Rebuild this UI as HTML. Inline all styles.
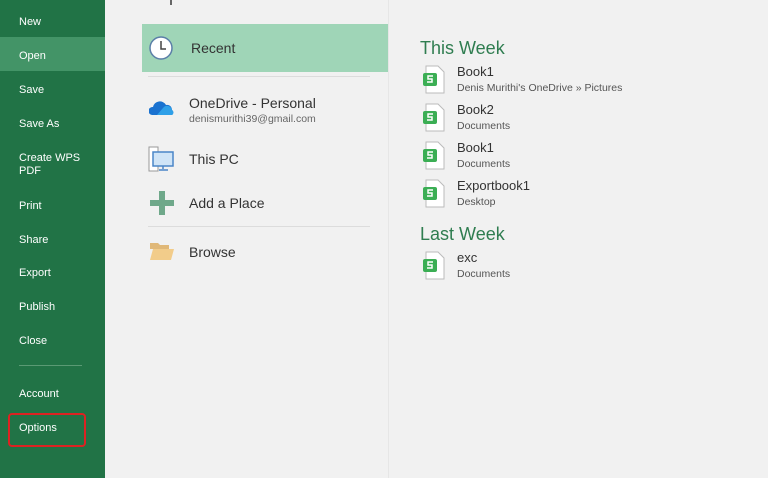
<!DOCTYPE html>
<html><head><style>
body{margin:0;width:768px;height:478px;overflow:hidden;background:#f1f1f1;font-family:"Liberation Sans",sans-serif;position:relative}
.a{position:absolute;white-space:nowrap}
#side{position:absolute;left:0;top:0;width:105px;height:478px;background:#217346}
.s{position:absolute;left:19px;color:#fff;font-size:11px;line-height:13px}
.m{font-size:14px;color:#333}
.sub{font-size:10.5px;color:#555}
.h{font-size:18px;color:#2f7d50}
.fn{font-size:13px;color:#333}
</style></head><body>
<div id="side">
<div class="a" style="left:0;top:37px;width:105px;height:34px;background:#439467"></div>
<div class="s" style="top:16px">New</div>
<div class="s" style="top:50px">Open</div>
<div class="s" style="top:84px">Save</div>
<div class="s" style="top:118px">Save As</div>
<div class="s" style="top:152px">Create WPS<br>PDF</div>
<div class="s" style="top:200px">Print</div>
<div class="s" style="top:234px">Share</div>
<div class="s" style="top:267px">Export</div>
<div class="s" style="top:301px">Publish</div>
<div class="s" style="top:335px">Close</div>
<div class="a" style="left:19px;top:365px;width:63px;height:1px;background:#5a9a74"></div>
<div class="s" style="top:388px">Account</div>
<div class="s" style="top:422px">Options</div>
<div class="a" style="left:8px;top:413px;width:74px;height:30px;border:2px solid #d22;border-radius:4px"></div>
</div>
<div class="a" style="left:170px;top:0;width:2px;height:5px;background:#666"></div>
<div class="a" style="left:388px;top:0;width:1px;height:478px;background:#e6e6e6"></div>
<div class="a" style="left:142px;top:24px;width:246px;height:48px;background:#9fd5b7"></div>
<svg class="a" style="left:149px;top:36px" width="24" height="24"><circle cx="12" cy="12" r="11" fill="#fff" stroke="#5b7fa8" stroke-width="1.5"/><path d="M12 5V13H17" stroke="#444" stroke-width="1.5" fill="none"/></svg>
<div class="a m" style="left:191px;top:40px">Recent</div>
<div class="a" style="left:148px;top:76px;width:222px;height:1px;background:#dcdcdc"></div>
<svg class="a" style="left:149px;top:98px" width="26" height="20"><path d="M3 17a4 4 0 0 1 1-8 7 7 0 0 1 13-2 5 5 0 0 1 6 5 3 3 0 0 1 0 5z" fill="#1a72d0"/><path d="M8 17 14 10a5 5 0 0 1 9 2 3 3 0 0 1 0 5z" fill="#2fa0e8"/></svg>
<div class="a m" style="left:189px;top:95px">OneDrive - Personal</div>
<div class="a sub" style="left:189px;top:113px;color:#666">denismurithi39@gmail.com</div>
<svg class="a" style="left:148px;top:146px" width="28" height="27"><rect x="1" y="1" width="9" height="24" fill="#fff" stroke="#999"/><rect x="5" y="6" width="20" height="14" fill="#cfe4f7" stroke="#4a86c8" stroke-width="1.5"/><path d="M15 20v3M11 24h9" stroke="#4a86c8" stroke-width="1.5"/></svg>
<div class="a m" style="left:189px;top:151px">This PC</div>
<svg class="a" style="left:150px;top:191px" width="24" height="24"><path d="M9 0h6v9h9v6h-9v9H9v-9H0V9h9z" fill="#6fa88a"/></svg>
<div class="a m" style="left:189px;top:195px">Add a Place</div>
<div class="a" style="left:148px;top:226px;width:222px;height:1px;background:#dcdcdc"></div>
<svg class="a" style="left:149px;top:241px" width="26" height="20"><path d="M1 2h8l2 2h9v4H1z" fill="#e0b878"/><path d="M1 19 4 8h21l-3 11z" fill="#f2cc8a"/></svg>
<div class="a m" style="left:189px;top:244px">Browse</div>

<div class="a h" style="left:420px;top:38px">This Week</div>
<div class="a h" style="left:420px;top:224px">Last Week</div>
<div id="files"></div>
<script>
var f=[["Book1","Denis Murithi's OneDrive » Pictures",64],["Book2","Documents",102],["Book1","Documents",140],["Exportbook1","Desktop",178],["exc","Documents",250]];
var h="";f.forEach(function(r){var y=r[2];
h+='<svg class="a" style="left:422px;top:'+(y+1)+'px" width="24" height="30"><path d="M4 1h12l6 6v21H4z" fill="#fff" stroke="#bbb"/><rect x="1" y="8" width="14" height="13" rx="2" fill="#3bae54"/><path d="M11 11H6v3h4v3H5" stroke="#fff" stroke-width="1.5" fill="none"/></svg>';
h+='<div class="a fn" style="left:457px;top:'+y+'px">'+r[0]+'</div><div class="a sub" style="left:457px;top:'+(y+18)+'px">'+r[1]+'</div>';});
document.getElementById("files").innerHTML=h;
</script>
</body></html>
